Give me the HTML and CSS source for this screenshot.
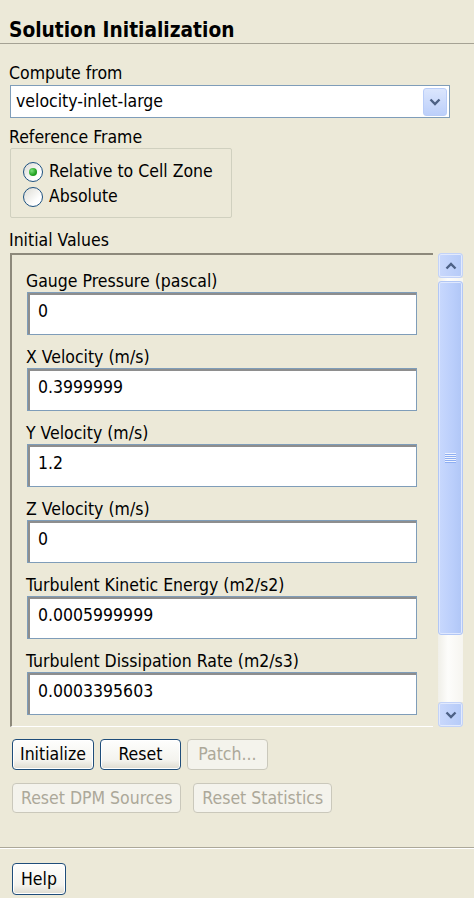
FILE: index.html
```html
<!DOCTYPE html>
<html lang="en">
<head>
  <meta charset="UTF-8" />
  <title>Solution Initialization</title>
  <link rel="stylesheet" href="styles.css">
</head>
<body>
  <div class="title">Solution Initialization</div>

  <div class="content">
    <div class="label">Compute from</div>
    <div class="combo">
      <span class="combo-text">velocity-inlet-large</span>
      <span class="combo-btn">
        <svg viewBox="0 0 12 8" width="12" height="8"><path d="M1.5 1.5 L6 6 L10.5 1.5" fill="none" stroke="#4d6185" stroke-width="2.4"/></svg>
      </span>
    </div>

    <div class="label frame-label">Reference Frame</div>
    <div class="group">
      <div class="radio"><span class="radio-dot checked"></span>Relative to Cell Zone</div>
      <div class="radio"><span class="radio-dot"></span>Absolute</div>
    </div>

    <div class="label values-label">Initial Values</div>
    <div class="values">
      <div class="values-view">
        <div class="field">
          <div class="field-label">Gauge Pressure (pascal)</div>
          <div class="field-input">0</div>
        </div>
        <div class="field">
          <div class="field-label">X Velocity (m/s)</div>
          <div class="field-input">0.3999999</div>
        </div>
        <div class="field">
          <div class="field-label">Y Velocity (m/s)</div>
          <div class="field-input">1.2</div>
        </div>
        <div class="field">
          <div class="field-label">Z Velocity (m/s)</div>
          <div class="field-input">0</div>
        </div>
        <div class="field">
          <div class="field-label">Turbulent Kinetic Energy (m2/s2)</div>
          <div class="field-input">0.0005999999</div>
        </div>
        <div class="field">
          <div class="field-label">Turbulent Dissipation Rate (m2/s3)</div>
          <div class="field-input">0.0003395603</div>
        </div>
      </div>

      <!-- vertical scrollbar -->
      <div class="scrollbar">
        <div class="sb-btn">
          <svg viewBox="0 0 12 8" width="12" height="8"><path d="M1.5 6.5 L6 2 L10.5 6.5" fill="none" stroke="#4d6185" stroke-width="2.4"/></svg>
        </div>
        <div class="sb-track">
          <div class="sb-thumb"><span class="grip"></span></div>
        </div>
        <div class="sb-btn">
          <svg viewBox="0 0 12 8" width="12" height="8"><path d="M1.5 1.5 L6 6 L10.5 1.5" fill="none" stroke="#4d6185" stroke-width="2.4"/></svg>
        </div>
      </div>
    </div>

    <div class="btn-row">
      <button class="btn">Initialize</button>
      <button class="btn">Reset</button>
      <button class="btn" disabled>Patch...</button>
    </div>
    <div class="btn-row row-two">
      <button class="btn" disabled>Reset DPM Sources</button>
      <button class="btn" disabled>Reset Statistics</button>
    </div>
  </div>

  <div class="footer">
    <button class="btn">Help</button>
  </div>
</body>
</html>
```

FILE: styles.css
```css
body {
  margin: 0;
  background: #ece9d8;
  font-family: "DejaVu Sans Condensed", "DejaVu Sans", sans-serif;
  font-size: 17.5px;
  line-height: 19px;
  color: #000;
}
.title {
  font-weight: bold;
  font-size: 20.7px;
  line-height: 26px;
  padding: 17px 0 0 9px;
  height: 26px;
  border-bottom: 1px solid #a5a294;
}
.content {
  padding: 20px 0 0 9px;
}
.label {
  height: 19px;
}
.combo {
  display: flex;
  align-items: center;
  justify-content: space-between;
  box-sizing: border-box;
  width: 440px;
  height: 33px;
  margin: 2px 0 0 1px;
  border: 1px solid #7f9db9;
  background: #fff;
}
.combo-text {
  padding-left: 5px;
}
.combo-btn {
  display: flex;
  align-items: center;
  justify-content: center;
  box-sizing: border-box;
  width: 24px;
  height: 28px;
  margin-right: 2px;
  border: 1px solid #b9cdf8;
  border-radius: 3px;
  background: linear-gradient(#dbe6fd, #bccffa);
}
.frame-label {
  margin-top: 10px;
}
.group {
  box-sizing: border-box;
  width: 222px;
  height: 70px;
  margin: 1px 0 0 1px;
  padding: 10px 0 0 12px;
  border: 1px solid #d0d0bf;
  border-radius: 2px;
}
.radio {
  display: flex;
  align-items: center;
  height: 25px;
}
.radio-dot {
  box-sizing: border-box;
  width: 20px;
  height: 20px;
  margin-right: 6px;
  border: 1px solid #1c5180;
  border-radius: 50%;
  background: linear-gradient(135deg, #dcdbd3, #fff 70%);
  position: relative;
}
.radio-dot.checked::after {
  content: "";
  position: absolute;
  left: 5px;
  top: 5px;
  width: 8px;
  height: 8px;
  border-radius: 50%;
  background: radial-gradient(circle at 35% 35%, #7de07d, #21a121 60%, #1a8a1a);
}
.values-label {
  margin-top: 13px;
}
.values {
  display: flex;
  margin: 3px 0 0 1px;
  height: 474px;
}
.values-view {
  box-sizing: border-box;
  width: 423px;
  height: 474px;
  overflow: hidden;
  padding: 17px 0 0 14px;
  border-top: 2px solid #8d897b;
  border-left: 2px solid #8d897b;
  border-bottom: 1px solid #fff;
}
.field {
  margin-bottom: 13px;
}
.field-label {
  height: 19px;
  margin-bottom: 1px;
}
.field-input {
  box-sizing: border-box;
  width: 390px;
  height: 43px;
  margin-left: 1px;
  padding: 9px 10px 0;
  border: 1px solid #7f9db9;
  background: #fff;
  box-shadow: inset 2px 2px 0 #8e8e8e;
}
.scrollbar {
  display: flex;
  flex-direction: column;
  width: 25px;
  margin-left: 5px;
}
.sb-btn {
  display: flex;
  align-items: center;
  justify-content: center;
  box-sizing: border-box;
  height: 25px;
  border: 1px solid #c3d3f8;
  border-radius: 3px;
  background: linear-gradient(to right, #c9d8fc, #b6cbf8);
  box-shadow: inset 0 0 0 1px #e2eafd;
}
.sb-track {
  flex: 1;
  padding-top: 3px;
  background: linear-gradient(to right, #f0efe8, #fdfdfb 40%, #f6f5f0);
}
.sb-thumb {
  display: flex;
  align-items: center;
  justify-content: center;
  box-sizing: border-box;
  height: 354px;
  border: 1px solid #b2c7f5;
  border-radius: 3px;
  background: linear-gradient(to right, #c8d8fd, #bacefb 60%, #b0c6f6);
  box-shadow: inset 0 0 0 1px #dfe8fe;
}
.grip {
  width: 11px;
  height: 10px;
  background: repeating-linear-gradient(#eef3fe 0, #eef3fe 1px, #8eaef2 1px, #8eaef2 2px);
}
.btn-row {
  display: flex;
  gap: 6px;
  margin: 12px 0 0 3px;
}
.row-two {
  gap: 12px;
  margin-top: 13px;
}
.btn {
  min-width: 81px;
  height: 31px;
  padding: 0 7px;
  font: inherit;
  color: #000;
  border: 1px solid #1f4d7a;
  border-radius: 4px;
  background: linear-gradient(#fefefd, #f4f3ee 70%, #dedbd0);
  box-shadow: inset 0 0 0 1px #fff;
}
.row-two .btn {
  height: 30px;
  padding: 0 8px;
}
.btn:disabled {
  color: #aca899;
  border-color: #cac8bb;
  background: #f4f3ec;
  box-shadow: none;
}
.footer {
  margin-top: 34px;
  padding: 15px 0 0 12px;
  border-top: 1px solid #aca899;
  box-shadow: inset 0 1px 0 #fff;
}
.footer .btn {
  min-width: 0;
  height: 32px;
  padding: 0 8px;
}
```
